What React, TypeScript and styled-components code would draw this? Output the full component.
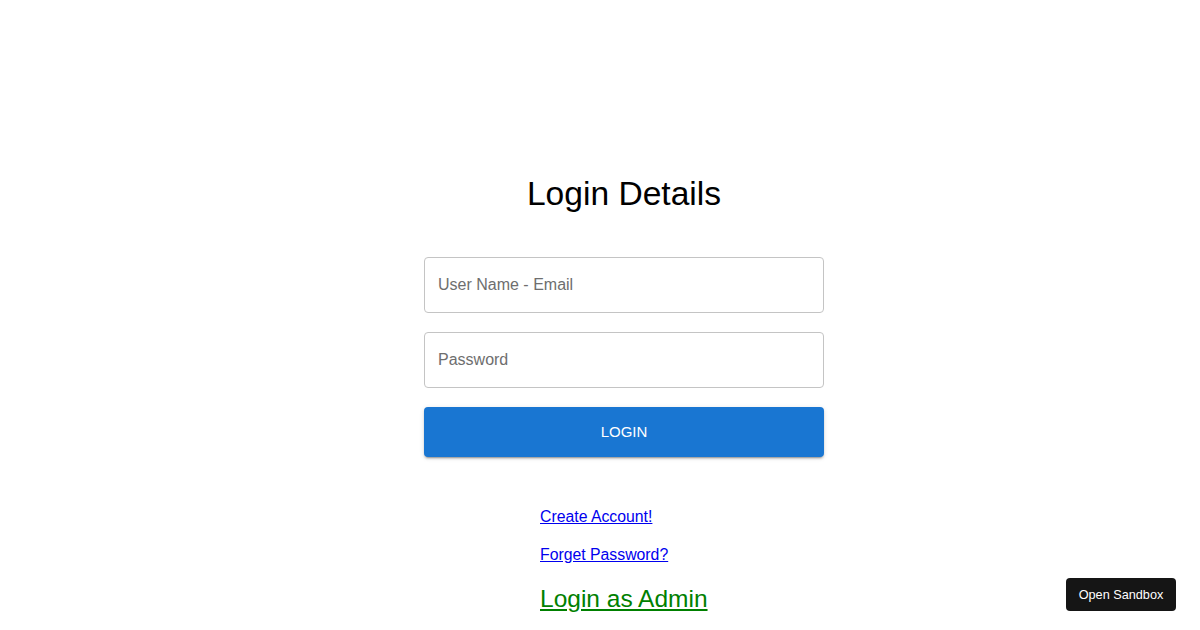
import React from "react";
import styled, { createGlobalStyle } from "styled-components";

const Global = createGlobalStyle`
  html, body { margin: 0; padding: 0; background: #fff; }
  body { font-family: "Liberation Sans", Arial, sans-serif; }
`;

const Page = styled.div`
  display: flex;
  flex-direction: column;
  align-items: center;
  padding-top: 175px;
  padding-left: 48px;
`;

const Title = styled.h1`
  margin: 0 0 44px;
  font-size: 33.6px;
  line-height: 38px;
  font-weight: 400;
  color: #000;
`;

const Form = styled.form`
  width: 400px;
  display: flex;
  flex-direction: column;
  gap: 19px;
`;

const Input = styled.input`
  box-sizing: border-box;
  width: 100%;
  height: 56px;
  border: 1px solid #c4c4c4;
  border-radius: 4px;
  padding: 0 13px;
  font-family: "Liberation Sans", Arial, sans-serif;
  font-size: 16px;
  color: #222;
  outline: none;
  &::placeholder { color: #6e6e6e; }
`;

const Button = styled.button`
  height: 50px;
  border: none;
  border-radius: 4px;
  background: #1976d2;
  color: #fff;
  font-family: "Liberation Sans", Arial, sans-serif;
  font-size: 15px;
  padding-bottom: 2px;
  text-transform: uppercase;
  box-shadow: 0 3px 1px -2px rgba(0,0,0,0.2), 0 2px 2px 0 rgba(0,0,0,0.14), 0 1px 5px 0 rgba(0,0,0,0.12);
  cursor: pointer;
`;

const Links = styled.div`
  width: 400px;
  box-sizing: border-box;
  padding-left: 116px;
  margin-top: 51px;
  display: flex;
  flex-direction: column;
  align-items: flex-start;
`;

const Link = styled.a<{ $big?: boolean }>`
  font-size: ${(p) => (p.$big ? "24.5px" : "15.8px")};
  line-height: ${(p) => (p.$big ? "30px" : "18px")};
  color: ${(p) => (p.$big ? "#008000" : "#0000ee")};
  text-decoration: underline;
  margin-bottom: ${(p) => (p.$big ? "0" : "20px")};
`;

const Sandbox = styled.button`
  position: fixed;
  right: 24px;
  bottom: 19px;
  width: 110px;
  height: 33px;
  padding: 0;
  background: #151515;
  color: #fff;
  border: none;
  border-radius: 4px;
  font-family: "Liberation Sans", Arial, sans-serif;
  font-size: 12.7px;
`;

export default function App() {
  return (
    <>
      <Global />
      <Page>
        <Title>Login Details</Title>
        <Form onSubmit={(e) => e.preventDefault()}>
          <Input placeholder="User Name - Email" />
          <Input type="password" placeholder="Password" />
          <Button type="submit">Login</Button>
        </Form>
        <Links>
          <Link href="#">Create Account!</Link>
          <Link href="#">Forget Password?</Link>
          <Link href="#" $big>Login as Admin</Link>
        </Links>
      </Page>
      <Sandbox>Open Sandbox</Sandbox>
    </>
  );
}
